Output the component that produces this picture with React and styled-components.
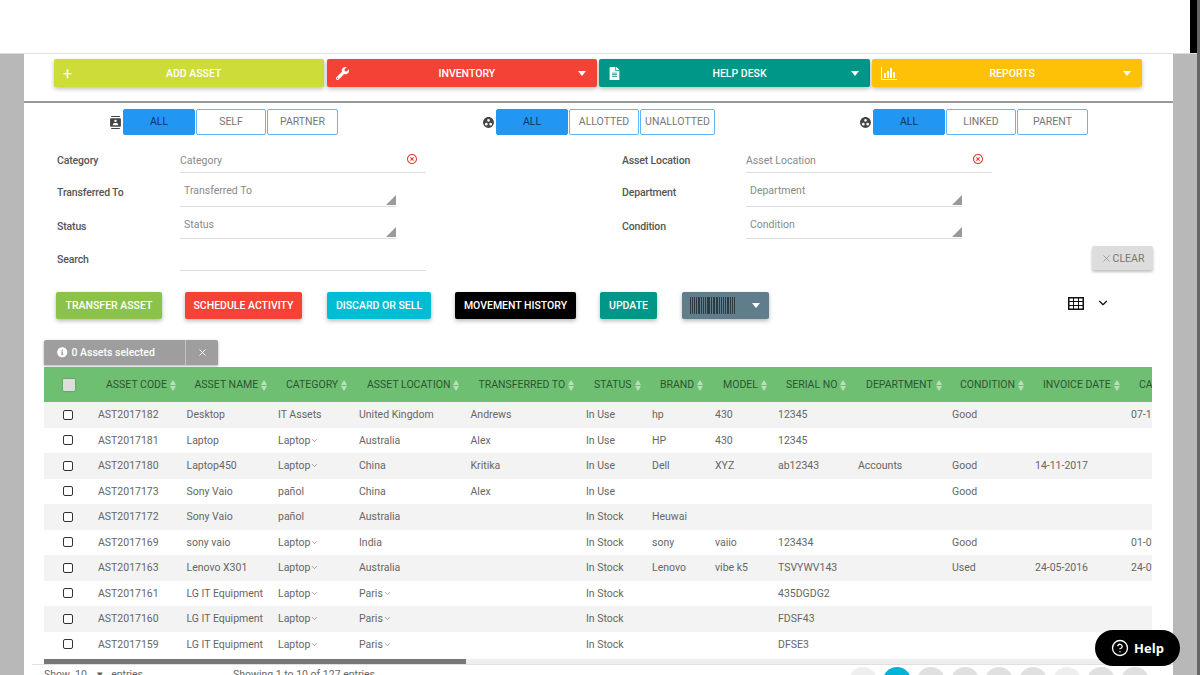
import React from 'react';
import styled, { createGlobalStyle } from 'styled-components';
import { FaWrench, FaFileAlt, FaInfoCircle } from 'react-icons/fa';
import { MdContacts, MdGroupWork, MdHighlightOff } from 'react-icons/md';
import { ChevronDown, CircleHelp, X } from 'lucide-react';

const Global = createGlobalStyle`
  html, body { margin: 0; height: 675px; overflow: hidden; background: #b8b8b8; }
  body { font-family: Roboto, "Liberation Sans", sans-serif; color: #666; }
  * { box-sizing: border-box; }
`;

const TopBar = styled.header`
  height: 54px; background: #fff; border-bottom: 1px solid #ddd;
`;
const Panel = styled.main`
  width: 1149px; margin-left: 24px; height: 621px; background: #fff; overflow: hidden;
`;
const MainNav = styled.nav`
  height: 49px; padding: 5px 0 0 30px; display: flex; gap: 2.4px; border-bottom: 2px solid #999;
`;
const NavButton = styled.button`
  width: 270.3px; height: 28px; border: 0; border-radius: 2px; background: ${p => p.$bg}; color: #fff;
  font: 500 10.5px Roboto, sans-serif; display: flex; align-items: center; padding: 0 11px 0 9px;
  box-shadow: 0 2px 4px rgba(0,0,0,.25);
`;
const NavIcon = styled.span`
  width: 20px; display: flex; align-items: center; font-size: ${p => p.$size || 13}px; font-weight: 400;
`;
const NavLabel = styled.span`
  flex: 1; text-align: center; padding-right: ${p => p.$pr || 0}px;
`;
const Caret = styled.span`
  width: 0; height: 0; border-left: 4px solid transparent; border-right: 4px solid transparent;
  border-top: 5px solid #fff; display: block;
`;
const ToggleRow = styled.section`
  height: 33px; padding-top: 6px; display: flex; align-items: flex-start;
`;
const ToggleGroup = styled.div`
  display: flex; align-items: center; gap: 1px; margin-left: ${p => p.$ml}px;
`;
const GroupIcon = styled.span`
  width: 14px; display: flex; margin-right: -1px; color: #444; font-size: 13px;
`;
const Toggle = styled.button`
  width: ${p => p.$w}px; height: 26px; border-radius: 2px; padding: 0 0 2px;
  border: 1px solid ${p => p.$on ? '#2196f3' : '#64b5f6'};
  background: ${p => p.$on ? '#2196f3' : '#fff'};
  color: ${p => p.$on ? '#0d3562' : '#777'}; font: 400 10.5px Roboto, sans-serif;
`;
const FormGrid = styled.section`
  margin-top: 10px; padding-left: 33px; display: grid;
  grid-template-columns: 123px 246px 196px 124px 246px 161px;
  grid-template-rows: 27px 34px 32px 32px;
`;
const Label = styled.label`
  font: 500 10.5px Roboto, sans-serif; color: #555; align-self: center; letter-spacing: -0.15px;
  padding-top: ${p => p.$pt || 0}px;
`;
const Field = styled.div`
  position: relative; border-bottom: 1px solid #ddd; font-size: 10.5px; color: #8a8a8a;
  padding: ${p => p.$select ? '11px 0 0 4px' : '8px 0 0'};
  margin-right: ${p => p.$select ? 30 : 0}px;
`;
const ClearIcon = styled.span`
  position: absolute; right: 8px; top: 7px; color: #e53935; font-size: 12px; display: flex;
`;
const Corner = styled.span`
  position: absolute; right: 0; bottom: 1px; width: 10px; height: 10px; background: #999;
  clip-path: polygon(100% 0, 100% 100%, 0 100%);
`;
const ClearCell = styled.div`display: flex; justify-content: flex-end; align-items: flex-end; padding-bottom: 1px;`;
const ClearButton = styled.button`
  width: 61px; height: 24px; border: 0; border-radius: 2px; background: #ddd; color: #777;
  font: 400 10.5px Roboto, sans-serif; display: flex; align-items: center; justify-content: center; gap: 1px;
  box-shadow: 0 2px 3px rgba(0,0,0,.25); padding: 0;
`;
const ActionRow = styled.section`
  height: 48px; margin-top: 21px; display: flex; align-items: flex-start; padding-left: 32px; position: relative;
`;
const ActionButton = styled.button`
  height: 27px; width: ${p => p.$w}px; margin-right: ${p => p.$mr}px; border: 0; border-radius: 2px;
  background: ${p => p.$bg}; color: #fff; font: 500 10.5px Roboto, sans-serif; padding: 0;
  box-shadow: 0 2px 4px rgba(0,0,0,.28); flex: none;
`;
const BarcodeButton = styled(ActionButton)`
  display: flex; align-items: center; padding: 0 9px 0 8px; justify-content: space-between;
`;
const ColumnTools = styled.div`
  margin-left: auto; margin-right: 63px; margin-top: 4px; display: flex; align-items: center; gap: 12px; color: #111;
`;
const SelectedBar = styled.div`
  margin-left: 20px; width: 174px; height: 25px; background: #9e9e9e; color: #fff; border-radius: 2px 2px 0 0;
  font: 500 10.5px Roboto, sans-serif; display: flex; align-items: center;
  box-shadow: 0 1px 3px rgba(0,0,0,.3);
`;
const SelectedInfo = styled.span`
  width: 142px; height: 100%; padding-left: 13px; display: flex; align-items: center; gap: 4px;
  border-right: 1px solid #c4c4c4;
`;
const SelectedClose = styled.span`flex: 1; display: flex; justify-content: center;`;
const TableWrap = styled.div`
  margin: 2px 0 0 20px; width: 1108px; overflow: hidden;
`;
const Table = styled.table`
  border-collapse: collapse; table-layout: fixed; width: 1127px;
`;
const Th = styled.th`
  height: 35px; background: #6fbf73; padding: 0 0 0 ${p => p.$pl || 0}px; text-align: left; white-space: nowrap; overflow: hidden;
  font: 400 10.5px Roboto, sans-serif; color: #2c5530;
`;
const Sort = styled.span`
  display: inline-flex; flex-direction: column; gap: 1px; margin-left: 3px; vertical-align: middle;
  &::before, &::after { content: ''; width: 0; height: 0; border-left: 3.5px solid transparent; border-right: 3.5px solid transparent; }
  &::before { border-bottom: 5px solid #b9e0bb; }
  &::after { border-top: 5px solid #b9e0bb; }
`;
const Row = styled.tr`
  height: 25.5px; background: ${p => p.$odd ? '#f3f3f3' : '#fff'};
`;
const Td = styled.td`
  padding: 0 0 0 ${p => p.$pl ?? 0}px; font-size: 10.5px; color: #666; white-space: nowrap; overflow: hidden;
`;
const Check = styled.span`
  display: block; width: 10px; height: 10px; margin-left: 19px; border: 1.5px solid #333; border-radius: 2px; background: #fff;
`;
const HeadCheck = styled.span`
  display: block; width: 12px; height: 12px; margin-left: 19px; background: #ddd; border-radius: 1px;
  box-shadow: 0 0 2px rgba(0,0,0,.4);
`;
const Small = styled(ChevronDown)`
  width: 9px; height: 9px; vertical-align: -1px; color: #666;
`;
const ScrollBar = styled.div`
  margin: 1.5px 0 0 20px; width: 1108px; height: 5px; background: #eee; display: flex;
`;
const Thumb = styled.div`width: 422px; background: #777;`;
const FooterLine = styled.div`height: 0; border-top: 1px solid #e0e0e0; margin-left: 8px;`;
const Footer = styled.footer`
  height: 20px; display: flex; padding-left: 20px; font-size: 10.5px; color: #666; position: relative;
`;
const ShowText = styled.span`width: 189px; padding-top: 3px; white-space: pre;`;
const InfoText = styled.span`padding-top: 3px;`;
const Pager = styled.div`
  margin-left: auto; margin-right: 24px; margin-top: 2px; display: flex; gap: 6px;
`;
const Dot = styled.span`
  width: 28px; height: 28px; border-radius: 50%; background: ${p => p.$on ? '#00b4d8' : p.$light ? '#eee' : '#e0e0e0'};
`;
const HelpButton = styled.button`
  position: fixed; left: 1095px; top: 630px; width: 85px; height: 36px; border: 0; border-radius: 18px;
  background: #000; color: #fff; font: 700 13px "Open Sans", sans-serif; display: flex; align-items: center; justify-content: center; gap: 5px;
`;
const WindowEdge = styled.span`
  position: fixed; left: 1197px; top: 0; width: 3px; height: 675px; background: #666;
`;
const TopEdge = styled.span`
  position: fixed; left: 1190px; top: 0; width: 7px; height: 53px; background: #000;
`;

const Barcode = () => {
  const bars = [1,1,1,1,2,1,1,1,3,1,2,2,1,1,1,1,2,1,1,1,2,1,1];
  let x = 0;
  return (
    <svg width="46" height="17" viewBox="0 0 46 17">
      {bars.map((w, i) => {
        const r = <rect key={i} x={x} y="0" width={w} height="17" fill="#2c3a42" />;
        x += w + 1;
        return r;
      })}
    </svg>
  );
};

const ChartIcon = () => (
  <svg width="16" height="13" viewBox="0 0 16 13" fill="#fff">
    <rect x="0" y="0" width="1" height="13" /><rect x="0" y="12" width="16" height="1" />
    <rect x="3" y="6" width="2" height="5" /><rect x="6" y="4" width="2" height="7" />
    <rect x="9" y="1" width="2" height="10" /><rect x="12" y="5" width="2" height="6" />
  </svg>
);

const TableIcon = () => (
  <svg width="16" height="13" viewBox="0 0 16 13" fill="none" stroke="#111">
    <rect x="0.75" y="0.75" width="14.5" height="11.5" strokeWidth="1.5" />
    <path d="M1 4.5H15M1 8.5H15M5.5 1V12M10.5 1V12" strokeWidth="1" />
  </svg>
);

const columns = [
  ['ASSET CODE', 88.5], ['ASSET NAME', 91.5], ['CATEGORY', 81], ['ASSET LOCATION', 111.5], ['TRANSFERRED TO', 115.5],
  ['STATUS', 66], ['BRAND', 63], ['MODEL', 63], ['SERIAL NO', 80], ['DEPARTMENT', 94], ['CONDITION', 83], ['INVOICE DATE', 96], ['CA', 100],
];

const L = ({ children }) => <>{children}<Small strokeWidth={1.5} /></>;

const rows = [
  ['AST2017182', 'Desktop', 'IT Assets', 'United Kingdom', 'Andrews', 'In Use', 'hp', '430', '12345', '', 'Good', '', '07-11-2017'],
  ['AST2017181', 'Laptop', <L>Laptop</L>, 'Australia', 'Alex', 'In Use', 'HP', '430', '12345', '', '', '', ''],
  ['AST2017180', 'Laptop450', <L>Laptop</L>, 'China', 'Kritika', 'In Use', 'Dell', 'XYZ', 'ab12343', 'Accounts', 'Good', '14-11-2017', ''],
  ['AST2017173', 'Sony Vaio', 'pañol', 'China', 'Alex', 'In Use', '', '', '', '', 'Good', '', ''],
  ['AST2017172', 'Sony Vaio', 'pañol', 'Australia', '', 'In Stock', 'Heuwai', '', '', '', '', '', ''],
  ['AST2017169', 'sony vaio', <L>Laptop</L>, 'India', '', 'In Stock', 'sony', 'vaiio', '123434', '', 'Good', '', '01-07-2017'],
  ['AST2017163', 'Lenovo X301', <L>Laptop</L>, 'Australia', '', 'In Stock', 'Lenovo', 'vibe k5', 'TSVYWV143', '', 'Used', '24-05-2016', '24-05-2016'],
  ['AST2017161', 'LG IT Equipment', <L>Laptop</L>, <L>Paris</L>, '', 'In Stock', '', '', '435DGDG2', '', '', '', ''],
  ['AST2017160', 'LG IT Equipment', <L>Laptop</L>, <L>Paris</L>, '', 'In Stock', '', '', 'FDSF43', '', '', '', ''],
  ['AST2017159', 'LG IT Equipment', <L>Laptop</L>, <L>Paris</L>, '', 'In Stock', '', '', 'DFSE3', '', '', '', ''],
];

const toggleGroups = [
  { ml: 85, icon: <MdContacts />, items: [['ALL', 72, true], ['SELF', 70], ['PARTNER', 71]] },
  { ml: 144, icon: <MdGroupWork />, items: [['ALL', 72, true], ['ALLOTTED', 70], ['UNALLOTTED', 75]] },
  { ml: 144, icon: <MdGroupWork />, items: [['ALL', 72, true], ['LINKED', 70], ['PARENT', 71]] },
];

export default function App() {
  return (
    <>
      <Global />
      <TopBar />
      <TopEdge />
      <WindowEdge />
      <Panel>
        <MainNav>
          <NavButton $bg="#cddc39"><NavIcon $size={16}>+</NavIcon><NavLabel $pr={9}>ADD ASSET</NavLabel></NavButton>
          <NavButton $bg="#f44336"><NavIcon><FaWrench /></NavIcon><NavLabel>INVENTORY</NavLabel><Caret /></NavButton>
          <NavButton $bg="#009688"><NavIcon><FaFileAlt /></NavIcon><NavLabel>HELP DESK</NavLabel><Caret /></NavButton>
          <NavButton $bg="#ffc107"><NavIcon><ChartIcon /></NavIcon><NavLabel>REPORTS</NavLabel><Caret /></NavButton>
        </MainNav>
        <ToggleRow>
          {toggleGroups.map((g, i) => (
            <ToggleGroup key={i} $ml={g.ml}>
              <GroupIcon>{g.icon}</GroupIcon>
              {g.items.map(([t, w, on]) => <Toggle key={t} $w={w} $on={on}>{t}</Toggle>)}
            </ToggleGroup>
          ))}
        </ToggleRow>
        <FormGrid>
          <Label $pt={2}>Category</Label>
          <Field>Category<ClearIcon><MdHighlightOff /></ClearIcon></Field>
          <span />
          <Label $pt={2}>Asset Location</Label>
          <Field>Asset Location<ClearIcon><MdHighlightOff /></ClearIcon></Field>
          <span />
          <Label $pt={4}>Transferred To</Label>
          <Field $select>Transferred To<Corner /></Field>
          <span />
          <Label $pt={4}>Department</Label>
          <Field $select>Department<Corner /></Field>
          <span />
          <Label $pt={6}>Status</Label>
          <Field $select>Status<Corner /></Field>
          <span />
          <Label $pt={6}>Condition</Label>
          <Field $select>Condition<Corner /></Field>
          <span />
          <Label $pt={8}>Search</Label>
          <Field />
          <span /><span /><span />
          <ClearCell><ClearButton><X size={11} strokeWidth={1.25} />CLEAR</ClearButton></ClearCell>
        </FormGrid>
        <ActionRow>
          <ActionButton $bg="#8bc34a" $w={106} $mr={23}>TRANSFER ASSET</ActionButton>
          <ActionButton $bg="#f44336" $w={117} $mr={25}>SCHEDULE ACTIVITY</ActionButton>
          <ActionButton $bg="#00bcd4" $w={104} $mr={24}>DISCARD OR SELL</ActionButton>
          <ActionButton $bg="#000" $w={121} $mr={24}>MOVEMENT HISTORY</ActionButton>
          <ActionButton $bg="#009688" $w={57} $mr={25}>UPDATE</ActionButton>
          <BarcodeButton as="div" $bg="#607d8b" $w={87} $mr={0}><Barcode /><Caret /></BarcodeButton>
          <ColumnTools><TableIcon /><ChevronDown size={14} strokeWidth={2} /></ColumnTools>
        </ActionRow>
        <SelectedBar>
          <SelectedInfo><FaInfoCircle />0 Assets selected</SelectedInfo>
          <SelectedClose><X size={11} strokeWidth={2} /></SelectedClose>
        </SelectedBar>
        <TableWrap>
          <Table>
            <colgroup>
              <col style={{ width: 44 }} />
              {columns.map(([n, w]) => <col key={n} style={{ width: w }} />)}
            </colgroup>
            <thead>
              <tr>
                <Th><HeadCheck /></Th>
                {columns.map(([n]) => <Th key={n} $pl={18}>{n}<Sort /></Th>)}
              </tr>
            </thead>
            <tbody>
              {rows.map((r, i) => (
                <Row key={r[0]} $odd={i % 2 === 0}>
                  <Td><Check /></Td>
                  {r.map((c, j) => <Td key={j} $pl={10}>{c}</Td>)}
                </Row>
              ))}
            </tbody>
          </Table>
        </TableWrap>
        <ScrollBar><Thumb /></ScrollBar>
        <FooterLine />
        <Footer>
          <ShowText>{'Show  10    ▾   entries'}</ShowText>
          <InfoText>Showing 1 to 10 of 127 entries</InfoText>
          <Pager>
            <Dot $light /><Dot $on /><Dot /><Dot /><Dot /><Dot /><Dot $light /><Dot /><Dot />
          </Pager>
        </Footer>
      </Panel>
      <HelpButton><CircleHelp size={18} strokeWidth={1.75} />Help</HelpButton>
    </>
  );
}
